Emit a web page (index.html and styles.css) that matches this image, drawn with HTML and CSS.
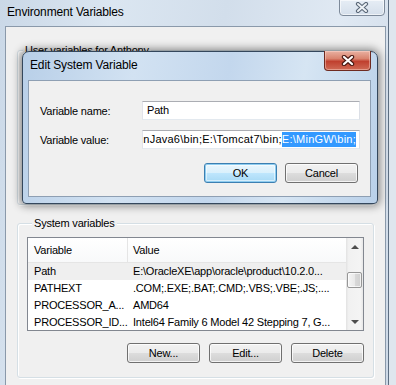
FILE: index.html
```html
<!DOCTYPE html>
<html>
<head>
    <title>Environment Variables</title>
    <link rel="stylesheet" href="styles.css">
</head>
<body>
<div class="screen">
    <div class="window">
        <div class="titlebar">
            <span class="title">Environment Variables</span>
            <div class="close">
                <svg width="14" height="11" viewBox="0 0 14 11">
                    <path d="M3 2 L11 9 M11 2 L3 9" stroke="#5b6878" stroke-width="4.2" stroke-linecap="round"/>
                    <path d="M3 2 L11 9 M11 2 L3 9" stroke="#eef2f6" stroke-width="2" stroke-linecap="round"/>
                </svg>
            </div>
        </div>
        <div class="client">
            <div class="group user-group">
                <div class="group-title">User variables for Anthony</div>
            </div>
            <div class="group sys-group">
                <div class="group-title">System variables</div>
                <div class="list">
                    <div class="table">
                        <div class="row head">
                            <div class="cell col-name">Variable</div>
                            <div class="cell col-value">Value</div>
                        </div>
                        <div class="row selected">
                            <div class="cell col-name">Path</div>
                            <div class="cell col-value">E:\OracleXE\app\oracle\product\10.2.0...</div>
                        </div>
                        <div class="row">
                            <div class="cell col-name">PATHEXT</div>
                            <div class="cell col-value">.COM;.EXE;.BAT;.CMD;.VBS;.VBE;.JS;....</div>
                        </div>
                        <div class="row">
                            <div class="cell col-name">PROCESSOR_A...</div>
                            <div class="cell col-value">AMD64</div>
                        </div>
                        <div class="row">
                            <div class="cell col-name">PROCESSOR_ID...</div>
                            <div class="cell col-value">Intel64 Family 6 Model 42 Stepping 7, G...</div>
                        </div>
                    </div>
                    <div class="scrollbar">
                        <div class="sb-arrow"><span class="tri-up"></span></div>
                        <div class="sb-track"><div class="sb-thumb"></div></div>
                        <div class="sb-arrow"><span class="tri-down"></span></div>
                    </div>
                </div>
                <div class="actions">
                    <button class="btn">New...</button>
                    <button class="btn">Edit...</button>
                    <button class="btn">Delete</button>
                </div>
            </div>
        </div>
    </div>

    <!-- modal dialog over the parent window -->
    <div class="dialog">
        <div class="dialog-title">
            <span class="dialog-caption">Edit System Variable</span>
            <div class="close-red">
                <svg width="14" height="11" viewBox="0 0 14 11">
                    <path d="M3 2 L11 9 M11 2 L3 9" stroke="#4a1a14" stroke-width="4.4" stroke-linecap="round"/>
                    <path d="M3 2 L11 9 M11 2 L3 9" stroke="#ffffff" stroke-width="2.2" stroke-linecap="round"/>
                </svg>
            </div>
        </div>
        <div class="dialog-client">
            <div class="form">
                <label>Variable name:</label>
                <div class="input">Path</div>
                <label>Variable value:</label>
                <div class="input value-input">
                    <span class="plain">unJava6\bin;E:\Tomcat7\bin;</span><span class="sel">E:\MinGW\bin;</span>
                </div>
            </div>
            <div class="dialog-actions">
                <button class="btn btn-default">OK</button>
                <button class="btn">Cancel</button>
            </div>
        </div>
    </div>
</div>
</body>
</html>
```

FILE: styles.css
```css
* { box-sizing: border-box; }
body {
    margin: 0;
    font-family: "Liberation Sans", Arial, sans-serif;
    font-size: 11px;
    letter-spacing: -0.2px;
    color: #000;
}
.screen {
    position: relative;
    width: 396px;
    height: 385px;
    overflow: hidden;
    background: #dfe6ee;
}

/* parent window */
.window {
    width: 389px;
    height: 385px;
    display: flex;
    flex-direction: column;
    border-right: 1px solid #5d6e82;
    background: linear-gradient(100deg, #cad8e7 0%, #dbe6f1 25%, #d2deeb 50%, #e0e9f3 75%, #cdd9e7 100%);
}
.titlebar {
    height: 26px;
    display: flex;
    justify-content: space-between;
    align-items: flex-start;
}
.title {
    font-size: 12px;
    letter-spacing: -0.15px;
    line-height: 15px;
    margin: 5px 0 0 7px;
}
.close {
    width: 46px;
    height: 17px;
    margin: -1px 3px 0 0;
    border: 1px solid #7d8a9a;
    border-radius: 0 0 4px 4px;
    background: linear-gradient(#e6edf5, #d5dfeb);
    box-shadow: inset 0 0 0 1px rgba(255,255,255,0.6);
    display: flex;
    align-items: center;
    justify-content: center;
}
.client {
    flex: 1;
    margin: 0 2px 0 5px;
    border: 1px solid #8a99aa;
    border-bottom: none;
    background: #f0f0f0;
    padding: 0 11px;
}
.group {
    border: 1px solid #d5dfe5;
    border-radius: 3px;
    box-shadow: inset 1px 1px 0 #fff, 1px 1px 0 #fff;
}
.group-title {
    display: table;
    margin: -8px 0 0 5px;
    padding: 0 2px;
    line-height: 15px;
    background: #f0f0f0;
}
.user-group {
    margin-top: 23px;
    height: 155px;
}
.sys-group {
    margin-top: 18px;
    height: 155px;
    padding: 0 9px 0 9px;
}

/* list view */
.list {
    height: 94px;
    margin-top: 6px;
    border: 1px solid #828790;
    background: #fff;
    display: flex;
}
.table {
    flex: 1;
    overflow: hidden;
}
.row {
    display: grid;
    grid-template-columns: 100px 1fr;
    height: 17px;
    line-height: 17px;
    white-space: nowrap;
}
.row.head {
    height: 25px;
    line-height: 24px;
    border-bottom: 1px solid #e5e5e5;
    background: linear-gradient(#ffffff, #f8f9fa);
}
.row.head .col-name { border-right: 1px solid #e5e5e5; }
.row.selected { background: #efefef; }
.cell { overflow: hidden; }
.col-name { padding-left: 6px; }
.col-value { padding-left: 5px; }

.scrollbar {
    width: 17px;
    display: flex;
    flex-direction: column;
    background: linear-gradient(to right, #e2e2e2, #f1f1f1 15%, #f4f4f4 85%, #e7e7e7);
}
.sb-arrow {
    height: 17px;
    display: flex;
    align-items: center;
    justify-content: center;
}
.tri-up, .tri-down {
    width: 0;
    height: 0;
    border-left: 4px solid transparent;
    border-right: 4px solid transparent;
}
.tri-up { border-bottom: 4px solid #4d4d4d; }
.tri-down { border-top: 4px solid #4d4d4d; }
.sb-track { flex: 1; }
.sb-thumb {
    height: 16px;
    margin: 17px 1px 0 1px;
    border: 1px solid #979797;
    border-radius: 2px;
    background: linear-gradient(to right, #f5f5f5, #e9e9e9 50%, #d9d9d9 51%, #d0d0d0);
    box-shadow: inset 0 0 0 1px rgba(255,255,255,0.7);
}
.actions {
    display: flex;
    justify-content: flex-end;
    gap: 9px;
    margin-top: 12px;
}

/* buttons */
.btn {
    width: 73px;
    height: 20px;
    padding: 0;
    font-family: inherit;
    font-size: 11px;
    letter-spacing: -0.2px;
    color: #000;
    border: 1px solid #707070;
    border-radius: 3px;
    background: linear-gradient(#f2f2f2 0%, #ebebeb 50%, #dddddd 51%, #cfcfcf 100%);
    box-shadow: inset 0 0 0 1px rgba(255,255,255,0.75);
}
.btn-default {
    border-color: #3c7fb1;
    background: linear-gradient(#eaf6fd 0%, #d9f0fc 50%, #bee6fd 51%, #a7d9f5 100%);
    box-shadow: inset 0 0 0 1px #8fcdf0, inset 0 0 0 2px rgba(255,255,255,0.5);
}

/* edit dialog */
.dialog {
    position: absolute;
    left: 22px;
    top: 51px;
    width: 356px;
    height: 153px;
    border: 1px solid #34475c;
    border-radius: 7px 7px 4px 4px;
    background: linear-gradient(100deg, #b8cfe8 0%, #d2e2f2 30%, #c3d7ed 55%, #d6e5f3 75%, #b9d0e9 100%);
    box-shadow: 0 0 8px 2px rgba(0,0,0,0.45);
    padding: 0 6px 6px 5px;
    display: flex;
    flex-direction: column;
}
.dialog-title {
    height: 28px;
    display: flex;
    justify-content: space-between;
    align-items: flex-start;
}
.dialog-caption {
    font-size: 12px;
    letter-spacing: -0.15px;
    line-height: 15px;
    margin: 6px 0 0 2px;
}
.close-red {
    width: 47px;
    height: 20px;
    margin-top: -1px;
    border: 1px solid #6e2a20;
    border-top: none;
    border-radius: 0 0 4px 4px;
    background: linear-gradient(#e9b1a2 0%, #d9846f 40%, #c0402f 55%, #cf6a55 100%);
    box-shadow: inset 0 0 0 1px rgba(255,220,210,0.45);
    display: flex;
    align-items: center;
    justify-content: center;
}
.dialog-client {
    height: 117px;
    border: 1px solid #8e9fb3;
    background: #f0f0f0;
    padding: 20px 10px 0 11px;
}
.form {
    display: grid;
    grid-template-columns: 102px 1fr;
    row-gap: 10px;
    align-items: center;
}
.input {
    height: 19px;
    border: 1px solid;
    border-color: #abadb3 #dbdfe6 #e3e9ef #e2e3ea;
    background: #fff;
    padding: 0 3px 0 4px;
    line-height: 17px;
    white-space: nowrap;
    overflow: hidden;
}
.value-input {
    display: flex;
    justify-content: flex-end;
    align-items: center;
    letter-spacing: 0.25px;
}
.plain, .sel { flex-shrink: 0; }
.sel {
    background: #3399ff;
    color: #fff;
    line-height: 15px;
}
.dialog-actions {
    display: flex;
    justify-content: flex-end;
    gap: 8px;
    margin-top: 14px;
    padding-right: 2px;
}
```
